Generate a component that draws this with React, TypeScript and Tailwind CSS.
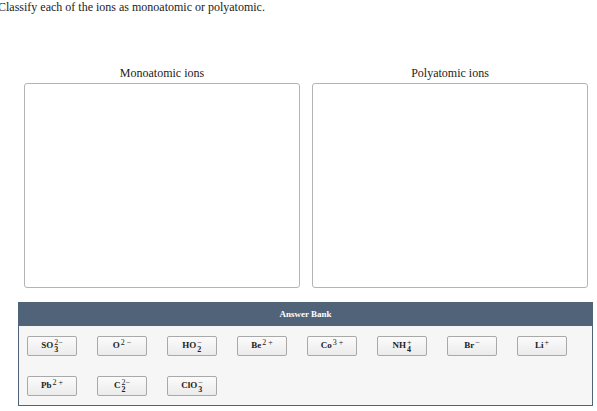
import type { ReactNode } from "react";

type Ion = { base: string; sub?: string; sup?: string };

const bank: Ion[] = [
  { base: "SO", sub: "3", sup: "2−" },
  { base: "O", sup: "2 −" },
  { base: "HO", sub: "2", sup: "−" },
  { base: "Be", sup: "2 +" },
  { base: "Co", sup: "3 +" },
  { base: "NH", sub: "4", sup: "+" },
  { base: "Br", sup: "−" },
  { base: "Li", sup: "+" },
  { base: "Pb", sup: "2 +" },
  { base: "C", sub: "2", sup: "2−" },
  { base: "ClO", sub: "3", sup: "−" },
];

const serif = "font-['Liberation_Serif','Times_New_Roman',serif]";

function Formula({ ion }: { ion: Ion }) {
  let charge: ReactNode = null;
  if (ion.sub && ion.sup) {
    // charge sits right above the subscript
    charge = (
      <span className="ml-[1px] inline-flex flex-col items-start text-[8px] leading-[7px] font-normal">
        <span className="whitespace-pre">{ion.sup}</span>
        <span className="font-bold">{ion.sub}</span>
      </span>
    );
  } else if (ion.sup) {
    charge = (
      <span className="relative -top-[3px] ml-[1px] whitespace-pre text-[8px] leading-none font-normal">
        {ion.sup}
      </span>
    );
  }
  return (
    <span className="inline-flex items-center">
      <span>{ion.base}</span>
      {charge}
    </span>
  );
}

function DropBox({ label }: { label: string }) {
  return (
    <div className="flex w-[276px] flex-col items-center">
      <div className="h-[14px] text-[12px] leading-[14px] text-[#222]">{label}</div>
      <div className="mt-[3px] h-[205px] w-full rounded-[3px] border border-[#b4b4b4] bg-white" />
    </div>
  );
}

export default function App() {
  return (
    <div className={`h-[411px] w-[597px] overflow-hidden bg-white ${serif}`}>
      <p className="-ml-[2px] h-[14px] text-[12px] leading-[14px] text-[#222]">
        Classify each of the ions as monoatomic or polyatomic.
      </p>

      <div className="mt-[52px] ml-[24px] flex gap-[12px]">
        <DropBox label="Monoatomic ions" />
        <DropBox label="Polyatomic ions" />
      </div>

      <div className="mt-[14px] ml-[18px] w-[575px] border border-[#4f6379]">
        <div className="flex h-[23px] items-center justify-center bg-[#506379] text-[9px] font-bold text-white">
          Answer Bank
        </div>
        <div className="flex flex-wrap gap-[20px] bg-[#f6f6f6] px-[8px] pt-[10px] pb-[9px]">
          {bank.map((ion, i) => (
            <button
              key={i}
              className="flex h-[20px] w-[50px] items-center justify-center rounded-[2px] border border-[#a9a9a9] bg-gradient-to-b from-[#fbfbfb] to-[#ebebeb] text-[9px] font-bold text-[#222]"
            >
              <Formula ion={ion} />
            </button>
          ))}
        </div>
      </div>
    </div>
  );
}
